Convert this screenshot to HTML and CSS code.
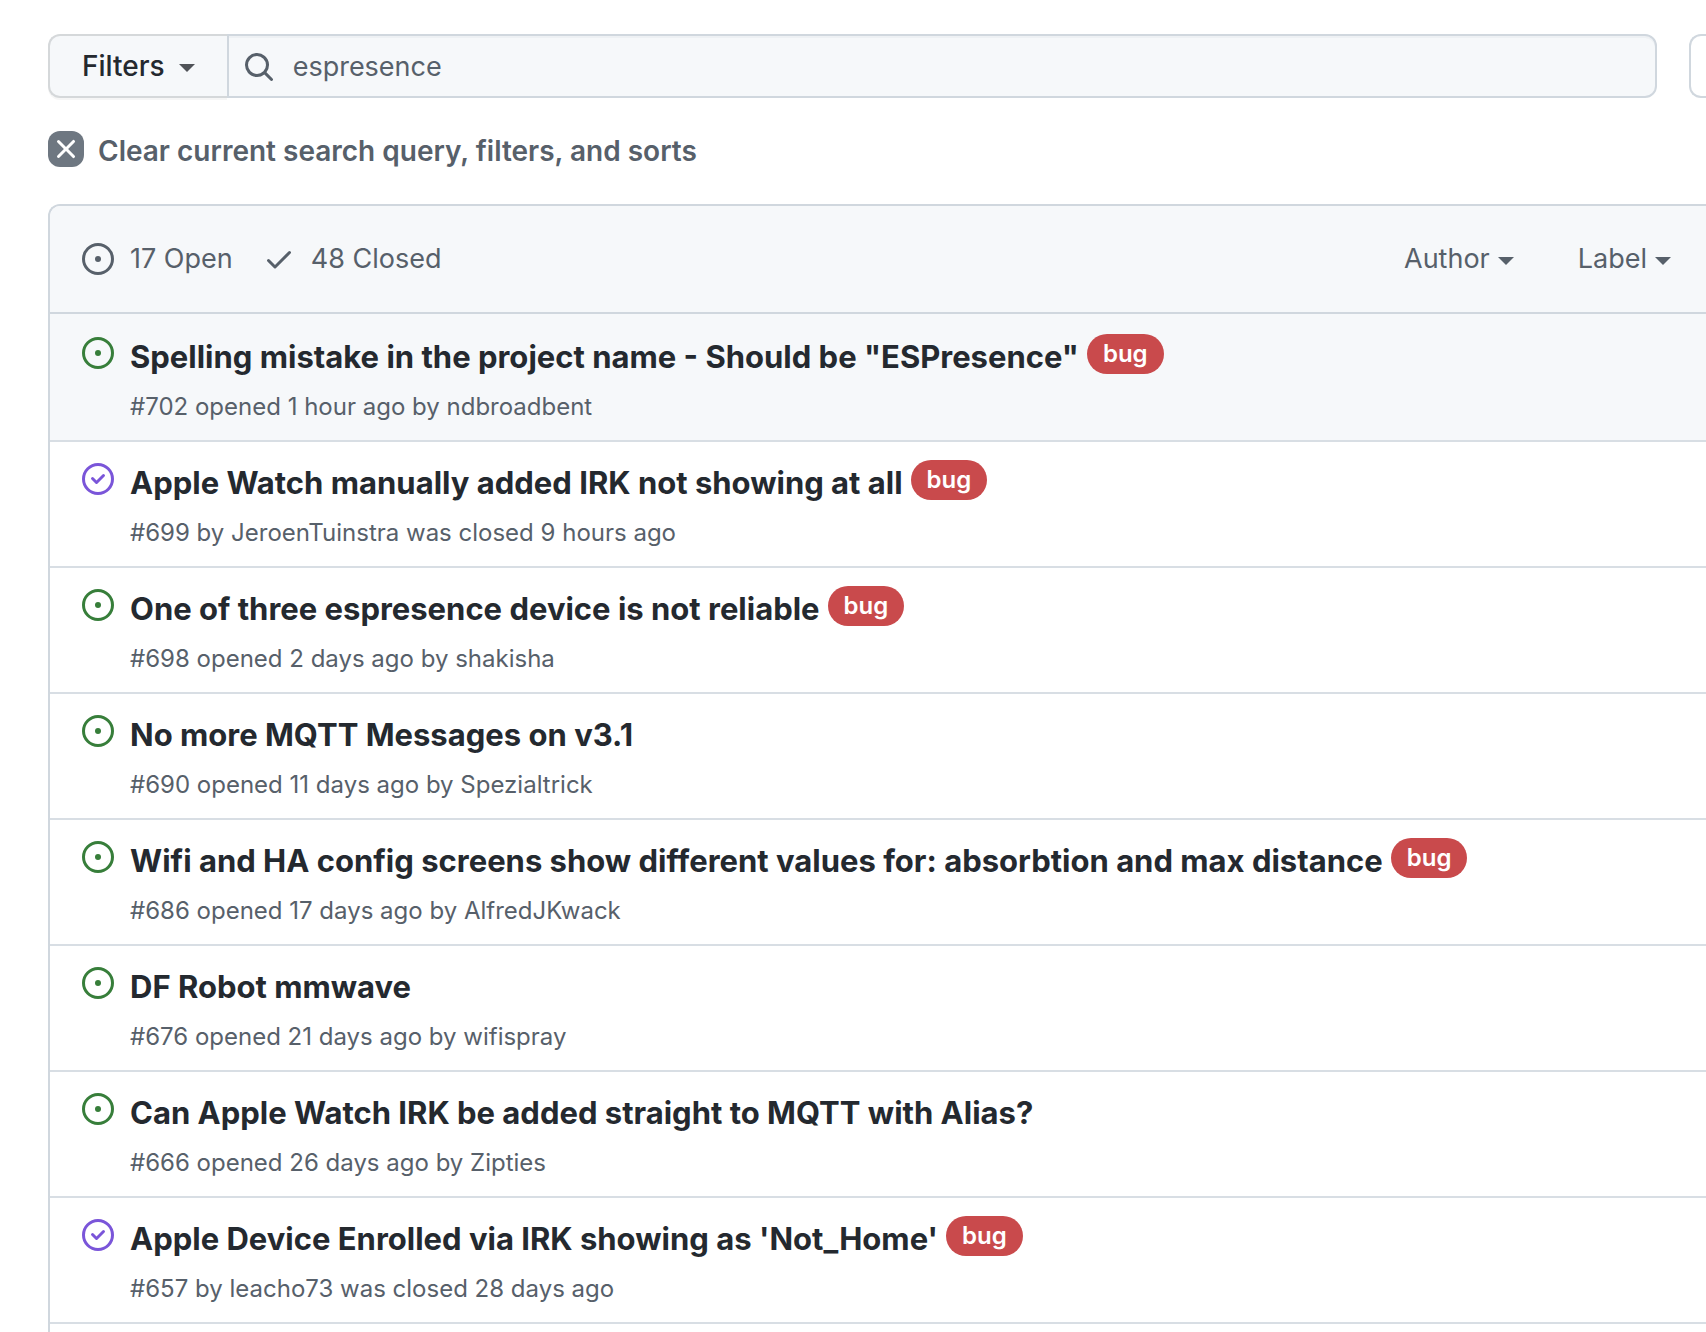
FILE: index.html
```html
<!DOCTYPE html>
<html lang="en">
<head>
    <meta charset="UTF-8">
    <meta name="viewport" content="width=device-width, initial-scale=1.0">
    <title>Issues</title>
    <link rel="stylesheet" href="styles.css">
</head>
<body>
    <svg class="sprite" aria-hidden="true">
        <symbol id="open" viewBox="0 0 16 16">
            <path d="M8 9.5a1.5 1.5 0 100-3 1.5 1.5 0 000 3z"/>
            <path fill-rule="evenodd" d="M8 0a8 8 0 100 16A8 8 0 008 0zM1.5 8a6.5 6.5 0 1113 0 6.5 6.5 0 01-13 0z"/>
        </symbol>
        <symbol id="closed" viewBox="0 0 16 16">
            <path d="M11.28 6.78a.75.75 0 00-1.06-1.06L7.25 8.69 5.78 7.22a.75.75 0 00-1.06 1.06l2 2a.75.75 0 001.06 0l3.5-3.5z"/>
            <path fill-rule="evenodd" d="M16 8A8 8 0 110 8a8 8 0 0116 0zm-1.5 0a6.5 6.5 0 11-13 0 6.5 6.5 0 0113 0z"/>
        </symbol>
        <symbol id="check" viewBox="0 0 16 16">
            <path d="M13.78 4.22a.75.75 0 010 1.06l-7.25 7.25a.75.75 0 01-1.06 0L2.22 9.28a.75.75 0 011.06-1.06L6 10.94l6.72-6.72a.75.75 0 011.06 0z"/>
        </symbol>
        <symbol id="search" viewBox="0 0 16 16">
            <path fill-rule="evenodd" d="M10.68 11.74a6 6 0 01-7.922-8.982 6 6 0 018.982 7.922l3.04 3.04a.75.75 0 01-1.06 1.06l-3.04-3.04zM11.5 7a4.5 4.5 0 10-9 0 4.5 4.5 0 009 0z"/>
        </symbol>
        <symbol id="x" viewBox="0 0 16 16">
            <path d="M3.72 3.72a.75.75 0 011.06 0L8 6.94l3.22-3.22a.75.75 0 111.06 1.06L9.06 8l3.22 3.22a.75.75 0 11-1.06 1.06L8 9.06l-3.22 3.22a.75.75 0 01-1.06-1.06L6.94 8 3.72 4.78a.75.75 0 010-1.06z"/>
        </symbol>
    </svg>

    <form class="toolbar">
        <button type="button" class="filters">Filters <span class="caret"></span></button>
        <div class="search">
            <svg class="icon"><use href="#search"/></svg>
            <input type="text" aria-label="Search all issues" value="espresence">
        </div>
        <div class="subnav"></div>
    </form>

    <a href="#" class="clear">
        <span class="clear-icon"><svg class="icon"><use href="#x"/></svg></span>
        <span class="clear-text">Clear current search query, filters, and sorts</span>
    </a>

    <div class="box">
        <div class="box-header">
            <div class="states">
                <a href="#"><svg class="icon"><use href="#open"/></svg>17 Open</a>
                <a href="#"><svg class="icon"><use href="#check"/></svg>48 Closed</a>
            </div>
            <div class="menus">
                <button type="button">Author <span class="caret"></span></button>
                <button type="button">Label <span class="caret"></span></button>
            </div>
        </div>
        <ul class="issues">
            <li class="issue selected">
                <svg class="icon open"><use href="#open"/></svg>
                <div>
                    <div class="title"><a href="#">Spelling mistake in the project name - Should be "ESPresence"</a><a href="#" class="label">bug</a></div>
                    <div class="meta">#702 opened 1 hour ago by <a href="#">ndbroadbent</a></div>
                </div>
            </li>
            <li class="issue">
                <svg class="icon closed"><use href="#closed"/></svg>
                <div>
                    <div class="title"><a href="#">Apple Watch manually added IRK not showing at all</a><a href="#" class="label">bug</a></div>
                    <div class="meta">#699 by <a href="#">JeroenTuinstra</a> was closed 9 hours ago</div>
                </div>
            </li>
            <li class="issue">
                <svg class="icon open"><use href="#open"/></svg>
                <div>
                    <div class="title"><a href="#">One of three espresence device is not reliable</a><a href="#" class="label">bug</a></div>
                    <div class="meta">#698 opened 2 days ago by <a href="#">shakisha</a></div>
                </div>
            </li>
            <li class="issue">
                <svg class="icon open"><use href="#open"/></svg>
                <div>
                    <div class="title"><a href="#">No more MQTT Messages on v3.1</a></div>
                    <div class="meta">#690 opened 11 days ago by <a href="#">Spezialtrick</a></div>
                </div>
            </li>
            <li class="issue">
                <svg class="icon open"><use href="#open"/></svg>
                <div>
                    <div class="title"><a href="#">Wifi and HA config screens show different values for: absorbtion and max distance</a><a href="#" class="label">bug</a></div>
                    <div class="meta">#686 opened 17 days ago by <a href="#">AlfredJKwack</a></div>
                </div>
            </li>
            <li class="issue">
                <svg class="icon open"><use href="#open"/></svg>
                <div>
                    <div class="title"><a href="#">DF Robot mmwave</a></div>
                    <div class="meta">#676 opened 21 days ago by <a href="#">wifispray</a></div>
                </div>
            </li>
            <li class="issue">
                <svg class="icon open"><use href="#open"/></svg>
                <div>
                    <div class="title"><a href="#">Can Apple Watch IRK be added straight to MQTT with Alias?</a></div>
                    <div class="meta">#666 opened 26 days ago by <a href="#">Zipties</a></div>
                </div>
            </li>
            <li class="issue">
                <svg class="icon closed"><use href="#closed"/></svg>
                <div>
                    <div class="title"><a href="#">Apple Device Enrolled via IRK showing as 'Not_Home'</a><a href="#" class="label">bug</a></div>
                    <div class="meta">#657 by <a href="#">leacho73</a> was closed 28 days ago</div>
                </div>
            </li>
        </ul>
    </div>
</body>
</html>
```
FILE: styles.css
```css
* {
    box-sizing: border-box;
}
body {
    display: flex;
    flex-direction: column;
    min-height: 100vh;
    font-family: Inter, "Liberation Sans", sans-serif;
    font-size: 27px;
    line-height: 40px;
    color: #24292f;
    background-color: #fff;
    margin: 0;
    padding: 34px 0 0 48px;
}
a {
    color: inherit;
    text-decoration: none;
}
button, input {
    font: inherit;
    color: inherit;
    background: none;
    border: none;
    padding: 0;
}
button {
    cursor: pointer;
}
.sprite {
    display: none;
}
.icon {
    width: 32px;
    height: 32px;
    flex: none;
    fill: currentColor;
}
.caret {
    margin-top: 4px;
    border: 8px solid transparent;
    border-top-color: currentColor;
    border-bottom: none;
}
.toolbar {
    display: flex;
    height: 64px;
}
.filters {
    display: flex;
    align-items: center;
    gap: 14px;
    padding: 0 32px;
    font-size: 28px;
    font-weight: 500;
    background-color: #f6f8fa;
    border: 2px solid #d5d8da;
    border-right: none;
    border-radius: 12px 0 0 12px;
    box-shadow: 0 2px 0 rgba(27,31,36,0.04);
}
.filters .caret {
    color: #505358;
}
.search {
    flex: 1;
    display: flex;
    align-items: center;
    gap: 18px;
    padding: 2px 0 0 14px;
    color: #57606a;
    background-color: #f6f8fa;
    border: 2px solid #d0d7de;
    border-radius: 0 12px 12px 0;
    box-shadow: inset 0 2px 0 rgba(208,215,222,0.2);
}
.search input {
    flex: 1;
    outline: none;
}
.subnav {
    width: 17px;
    margin-left: 32px;
    border: 2px solid #d0d7de;
    border-right: none;
    border-radius: 12px 0 0 12px;
}
.clear {
    display: flex;
    align-items: center;
    gap: 14px;
    margin: 32px 0 36px;
    height: 38px;
    font-size: 28px;
    font-weight: 600;
    color: #57606a;
}
.clear-text {
    padding-top: 4px;
}
.clear-icon {
    display: flex;
    padding: 2px;
    color: #fff;
    background-color: #6e7781;
    border-radius: 12px;
}
.box {
    flex: 1;
    border: 2px solid #d0d7de;
    border-right: none;
    border-bottom: none;
    border-radius: 12px 0 0 0;
    overflow: hidden;
}
.box-header {
    display: flex;
    justify-content: space-between;
    align-items: center;
    padding: 32px 35px 32px 32px;
    height: 108px;
    color: #57606a;
    background-color: #f6f8fa;
    border-bottom: 2px solid #d0d7de;
}
.states, .states a, .menus, .menus button {
    display: flex;
    align-items: center;
}
.states {
    gap: 30px;
}
.states a {
    gap: 16px;
}
.menus {
    gap: 64px;
}
.menus button {
    gap: 8px;
}
.issues {
    list-style: none;
    margin: 0;
    padding: 0;
    border-bottom: 2px solid #d8dee4;
}
.issue {
    display: flex;
    gap: 16px;
    padding: 17px 32px 15px;
    border-top: 2px solid #d8dee4;
}
.issue.selected {
    background-color: #f6f8fa;
    border-top-color: transparent;
}
.issue .icon {
    margin-top: 4px;
}
.open {
    color: #377e3a;
}
.closed {
    color: #7a55d9;
}
.title {
    display: flex;
    gap: 8px;
    font-size: 31px;
    font-weight: 650;
    line-height: 48px;
}
.label {
    height: 40px;
    margin-top: 1px;
    padding: 0 16px;
    font-size: 24px;
    font-weight: 600;
    line-height: 40px;
    color: #fff;
    background-color: #c94a4c;
    border-radius: 20px;
}
.meta {
    margin-top: 8px;
    font-size: 24px;
    line-height: 36px;
    color: #57606a;
}
```
